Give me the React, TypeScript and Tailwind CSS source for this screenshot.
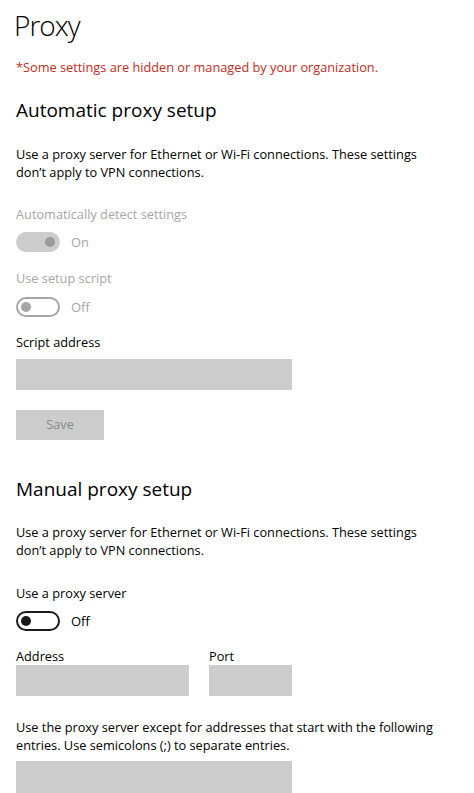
import React from "react";

function Toggle({ on, disabled }: { on: boolean; disabled?: boolean }) {
  if (on) {
    return (
      <div className="flex h-[20px] w-[44px] items-center justify-end rounded-full bg-[#cccccc] pr-[5px]">
        <div className="h-[10px] w-[10px] rounded-full bg-[#9a9a9a]" />
      </div>
    );
  }
  const c = disabled ? "border-[#a6a6a6]" : "border-[#1a1a1a]";
  const k = disabled ? "bg-[#a6a6a6]" : "bg-[#1a1a1a]";
  return (
    <div className={`flex h-[20px] w-[44px] items-center rounded-full border-2 pl-[3px] ${c}`}>
      <div className={`h-[10px] w-[10px] rounded-full ${k}`} />
    </div>
  );
}

function ToggleRow({ on, disabled }: { on: boolean; disabled?: boolean }) {
  return (
    <div className="flex h-[20px] items-center gap-[11px]">
      <Toggle on={on} disabled={disabled} />
      <span className={`text-[13px] leading-[18px] ${disabled ? "text-[#a6a6a6]" : "text-black"}`}>
        {on ? "On" : "Off"}
      </span>
    </div>
  );
}

export default function App() {
  return (
    <div
      className="min-h-[793px] bg-white pl-[16px] pt-[5px] text-black"
      style={{ fontFamily: '"Open Sans", "Noto Sans", sans-serif' }}
    >
      <h1 className="ml-[-2px] text-[28px] leading-[40px] font-light tracking-[-1px]">Proxy</h1>
      <p className="mt-[13px] text-[12.75px] leading-[18px] text-[#c42b1c]">
        *Some settings are hidden or managed by your organization.
      </p>

      <h2 className="mt-[20px] text-[19px] leading-[28px]">Automatic proxy setup</h2>
      <p className="mt-[22px] w-[424px] text-[12.75px] leading-[17.5px]">
        Use a proxy server for Ethernet or Wi-Fi connections. These settings don’t apply to VPN connections.
      </p>

      <p className="mt-[23.5px] text-[12.75px] leading-[18px] text-[#a6a6a6]">Automatically detect settings</p>
      <div className="mt-[9px]">
        <ToggleRow on disabled />
      </div>

      <p className="mt-[17px] text-[12.75px] leading-[18px] text-[#a6a6a6]">Use setup script</p>
      <div className="mt-[10px]">
        <ToggleRow on={false} disabled />
      </div>

      <p className="mt-[16px] text-[12.75px] leading-[18px]">Script address</p>
      <div className="mt-[8px] h-[31px] w-[276px] bg-[#cccccc]" />

      <div className="mt-[20px] flex h-[30px] w-[88px] items-center justify-center bg-[#cccccc] text-[12.75px] text-[#8a8a8a]">
        Save
      </div>

      <h2 className="mt-[35px] text-[19px] leading-[28px]">Manual proxy setup</h2>
      <p className="mt-[21.5px] w-[424px] text-[12.75px] leading-[17.5px]">
        Use a proxy server for Ethernet or Wi-Fi connections. These settings don’t apply to VPN connections.
      </p>

      <p className="mt-[24.5px] text-[12.75px] leading-[18px]">Use a proxy server</p>
      <div className="mt-[9px]">
        <ToggleRow on={false} />
      </div>

      <div className="mt-[16px] flex gap-[20px]">
        <div className="flex flex-col">
          <span className="text-[12.75px] leading-[18px]">Address</span>
          <div className="h-[31px] w-[173px] bg-[#cccccc]" />
        </div>
        <div className="flex flex-col">
          <span className="text-[12.75px] leading-[18px]">Port</span>
          <div className="h-[31px] w-[83px] bg-[#cccccc]" />
        </div>
      </div>

      <p className="mt-[23.5px] w-[424px] text-[12.75px] leading-[17.5px]">
        Use the proxy server except for addresses that start with the following entries. Use semicolons (;) to separate entries.
      </p>
      <div className="mt-[6.5px] h-[33px] w-[276px] bg-[#cccccc]" />
    </div>
  );
}
